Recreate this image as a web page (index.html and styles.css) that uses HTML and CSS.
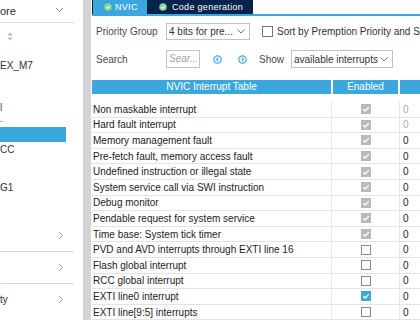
FILE: index.html
```html
<!DOCTYPE html>
<html>
<head>
    <title>NVIC Mode and Configuration</title>
    <link rel="stylesheet" href="styles.css">
</head>
<body>
    <div class="app">
        <div class="sidebar">
            <div class="side-head">
                <span class="side-title">ore</span>
                <svg class="chev" width="9" height="6" viewBox="0 0 9 6"><path d="M1 1 L4.5 4.5 L8 1" fill="none" stroke="#8a8a8a" stroke-width="1"/></svg>
            </div>
            <div class="side-sort">
                <svg width="6" height="9" viewBox="0 0 6 9"><path d="M3 0.5 L5.5 3.5 L0.5 3.5 Z" fill="#b8b8b8"/><path d="M3 8.5 L5.5 5.5 L0.5 5.5 Z" fill="#b8b8b8"/></svg>
            </div>
            <div class="tree-item item-cortex">EX_M7</div>
            <div class="tree-item item-l">l</div>
            <div class="tree-item item-dash">-</div>
            <div class="tree-item selected"></div>
            <div class="tree-item">CC</div>
            <div class="tree-item item-g1">G1</div>
            <div class="side-nav">
                <div class="nav-row"><span></span><svg width="6" height="9" viewBox="0 0 6 9"><path d="M1 1 L4.5 4.5 L1 8" fill="none" stroke="#9a9a9a" stroke-width="1"/></svg></div>
                <div class="nav-row"><span></span><svg width="6" height="9" viewBox="0 0 6 9"><path d="M1 1 L4.5 4.5 L1 8" fill="none" stroke="#9a9a9a" stroke-width="1"/></svg></div>
                <div class="nav-row last"><span>ty</span><svg width="6" height="9" viewBox="0 0 6 9"><path d="M1 1 L4.5 4.5 L1 8" fill="none" stroke="#9a9a9a" stroke-width="1"/></svg></div>
            </div>
        </div>
        <div class="splitter"></div>
        <div class="main">
            <div class="tabs">
                <div class="tab-group">
                    <div class="tab active">
                        <svg width="8" height="8" viewBox="0 0 8 8"><circle cx="4" cy="4" r="3.8" fill="#86d293"/><path d="M2.2 4.1 L3.5 5.4 L5.9 2.8" fill="none" stroke="#fff" stroke-width="1.1"/></svg>
                        <span>NVIC</span>
                    </div>
                    <div class="tab codegen">
                        <svg width="8" height="8" viewBox="0 0 8 8"><circle cx="4" cy="4" r="3.8" fill="#86d293"/><path d="M2.2 4.1 L3.5 5.4 L5.9 2.8" fill="none" stroke="#fff" stroke-width="1.1"/></svg>
                        <span>Code generation</span>
                    </div>
                </div>
            </div>

            <div class="form">
                <div class="form-row">
                    <label class="field-label">Priority Group</label>
                    <div class="select priority">
                        <span>4 bits for pre...</span>
                        <svg width="8" height="5" viewBox="0 0 8 5"><path d="M0.5 0.5 L4 4 L7.5 0.5" fill="none" stroke="#777" stroke-width="1"/></svg>
                    </div>
                    <span class="checkbox"></span>
                    <span class="check-label">Sort by Premption Priority and Subgroup Priority</span>
                </div>
                <div class="form-row second">
                    <label class="field-label">Search</label>
                    <div class="search-input">Sear...</div>
                    <svg class="nav-btn prev" width="9" height="9" viewBox="0 0 9 9"><circle cx="4.5" cy="4.5" r="3.7" fill="none" stroke="#3ba7de" stroke-width="1.2"/><path d="M5.2 2.8 L3.5 4.5 L5.2 6.2" fill="none" stroke="#3ba7de" stroke-width="1.2"/></svg>
                    <svg class="nav-btn next" width="9" height="9" viewBox="0 0 9 9"><circle cx="4.5" cy="4.5" r="3.7" fill="none" stroke="#3ba7de" stroke-width="1.2"/><path d="M3.8 2.8 L5.5 4.5 L3.8 6.2" fill="none" stroke="#3ba7de" stroke-width="1.2"/></svg>
                    <label class="field-label show-label">Show</label>
                    <div class="select show">
                        <span>available interrupts</span>
                        <svg width="8" height="5" viewBox="0 0 8 5"><path d="M0.5 0.5 L4 4 L7.5 0.5" fill="none" stroke="#777" stroke-width="1"/></svg>
                    </div>
                </div>
            </div>

            <div class="irq-table">
                <div class="irq-head">
                    <div>NVIC Interrupt Table</div>
                    <div>Enabled</div>
                    <div></div>
                </div>
                <div class="irq-body" id="irqBody"></div>
            </div>
        </div>
    </div>

    <script>
        // lignes de la table NVIC : [nom, etat, priorite desactivee]
        const rows = [
            ['Non maskable interrupt', 'locked', true],
            ['Hard fault interrupt', 'locked', true],
            ['Memory management fault', 'locked', false],
            ['Pre-fetch fault, memory access fault', 'locked', false],
            ['Undefined instruction or illegal state', 'locked', false],
            ['System service call via SWI instruction', 'locked', false],
            ['Debug monitor', 'locked', false],
            ['Pendable request for system service', 'locked', false],
            ['Time base: System tick timer', 'locked', false],
            ['PVD and AVD interrupts through EXTI line 16', 'off', false],
            ['Flash global interrupt', 'off', false],
            ['RCC global interrupt', 'off', false],
            ['EXTI line0 interrupt', 'on', false],
            ['EXTI line[9:5] interrupts', 'off', false]
        ];

        const tick = '<svg width="10" height="10" viewBox="0 0 10 10"><path d="M2.4 5.2 L4.2 7 L7.8 3.1" fill="none" stroke="#fff" stroke-width="1.3"/></svg>';
        const body = document.getElementById('irqBody');

        rows.forEach(([name, state, dim]) => {
            const row = document.createElement('div');
            row.className = 'irq-row';
            row.innerHTML = `
                <div class="cell name">${name}</div>
                <div class="cell enabled"><span class="cb ${state}">${state === 'off' ? '' : tick}</span></div>
                <div class="cell prio ${dim ? 'dim' : ''}">0</div>
            `;
            body.appendChild(row);
        });
    </script>
</body>
</html>
```

FILE: styles.css
```css
body {
    margin: 0;
    font-family: "Liberation Sans", Arial, sans-serif;
    font-size: 10px;
    color: #222;
    background: #fff;
}
.app {
    display: flex;
    width: 420px;
    height: 320px;
    overflow: hidden;
}

/* panneau de gauche */
.sidebar {
    width: 83px;
    flex-shrink: 0;
    overflow: hidden;
    color: #333;
}
.side-head {
    width: 74px;
    height: 23px;
    box-sizing: border-box;
    border-bottom: 1px solid #dcdcdc;
    display: flex;
    align-items: center;
    justify-content: space-between;
    padding-right: 10px;
}
.side-title {
    font-size: 11px;
    color: #2b2b2b;
}
.chev {
    margin-top: -3px;
}
.side-sort {
    height: 27px;
    display: flex;
    align-items: center;
    padding-left: 7px;
}
.tree-item {
    height: 15px;
    line-height: 15px;
    white-space: nowrap;
}
.item-cortex {
    margin-top: 8px;
}
.item-l {
    margin-top: 27px;
    color: #2d4a80;
}
.item-dash {
    height: 12px;
    line-height: 12px;
    color: #2d4a80;
    font-size: 8px;
}
.selected {
    width: 66px;
    background: #39a6dc;
}
.item-g1 {
    margin-top: 23px;
}
.side-nav {
    margin-top: 25px;
    width: 74px;
}
.nav-row {
    height: 31px;
    border-bottom: 1px solid #dcdcdc;
    display: flex;
    align-items: center;
    justify-content: space-between;
    padding-right: 10px;
}
.nav-row.last {
    border-bottom: none;
}

.splitter {
    width: 8px;
    flex-shrink: 0;
    background: #d4d4d4;
}

/* zone principale */
.main {
    flex: 1;
    min-width: 0;
    overflow: hidden;
    padding-left: 1px;
}
.tabs {
    height: 14px;
    border-bottom: 2px solid #3ba7de;
    display: flex;
}
.tab-group {
    display: flex;
    background: #03234b;
    padding-left: 1px;
}
.tab {
    display: flex;
    align-items: center;
    gap: 3px;
    color: #fff;
    font-size: 9px;
    letter-spacing: 0.3px;
    white-space: nowrap;
    box-sizing: border-box;
}
.tab.active {
    width: 54px;
    padding-left: 11px;
    background: #3ba7de;
}
.tab.codegen {
    width: 106px;
    padding-left: 12px;
    gap: 5px;
}

.form {
    padding: 7px 0 0 4px;
}
.form-row {
    display: flex;
    align-items: center;
    height: 17px;
    white-space: nowrap;
}
.form-row.second {
    height: 18px;
    margin-top: 10px;
}
.field-label {
    width: 70px;
    flex-shrink: 0;
    color: #4a4a4a;
}
.select {
    height: 100%;
    box-sizing: border-box;
    border: 1px solid #c2c2c2;
    display: flex;
    align-items: center;
    justify-content: space-between;
    padding: 0 4px 0 2px;
    flex-shrink: 0;
    color: #333;
}
.select.priority {
    width: 84px;
}
.select.show {
    width: 102px;
}
.checkbox {
    width: 9px;
    height: 9px;
    border: 1px solid #777;
    margin-left: 12px;
    flex-shrink: 0;
}
.check-label {
    margin-left: 4px;
    color: #333;
}
.search-input {
    width: 34px;
    height: 100%;
    box-sizing: border-box;
    border: 1px solid #c2c2c2;
    padding-left: 2px;
    line-height: 16px;
    color: #a0a0a0;
    font-style: italic;
    flex-shrink: 0;
}
.nav-btn {
    flex-shrink: 0;
}
.nav-btn.prev {
    margin-left: 13px;
}
.nav-btn.next {
    margin-left: 16px;
}
.show-label {
    width: 32px;
    margin-left: 12px;
}

/* table des interruptions */
.irq-table {
    margin-top: 12px;
    width: 370px;
}
.irq-head {
    display: grid;
    grid-template-columns: 239px 65px 64px;
    column-gap: 2px;
    height: 14px;
}
.irq-head div {
    background: #3ba7de;
    color: #fff;
    text-align: center;
    line-height: 14px;
}
.irq-body {
    margin-top: 8px;
}
.irq-row {
    display: grid;
    grid-template-columns: 240px 68px 62px;
    height: 15.6px;
    box-sizing: border-box;
    border-bottom: 1px solid #e4e4e4;
}
.cell {
    display: flex;
    align-items: center;
    white-space: nowrap;
    overflow: hidden;
}
.cell.name {
    padding-left: 1px;
    border-right: 1px solid #e6e6e6;
}
.cell.enabled {
    justify-content: center;
    border-right: 1px solid #e6e6e6;
}
.cell.prio {
    padding-left: 3px;
}
.cell.prio.dim {
    color: #aaa;
}
.cb {
    width: 10px;
    height: 10px;
    box-sizing: border-box;
    display: flex;
}
.cb.locked {
    background: #b9b9b9;
}
.cb.on {
    background: #3ba7de;
}
.cb.off {
    border: 1px solid #8a8a8a;
    background: #fff;
}
```
